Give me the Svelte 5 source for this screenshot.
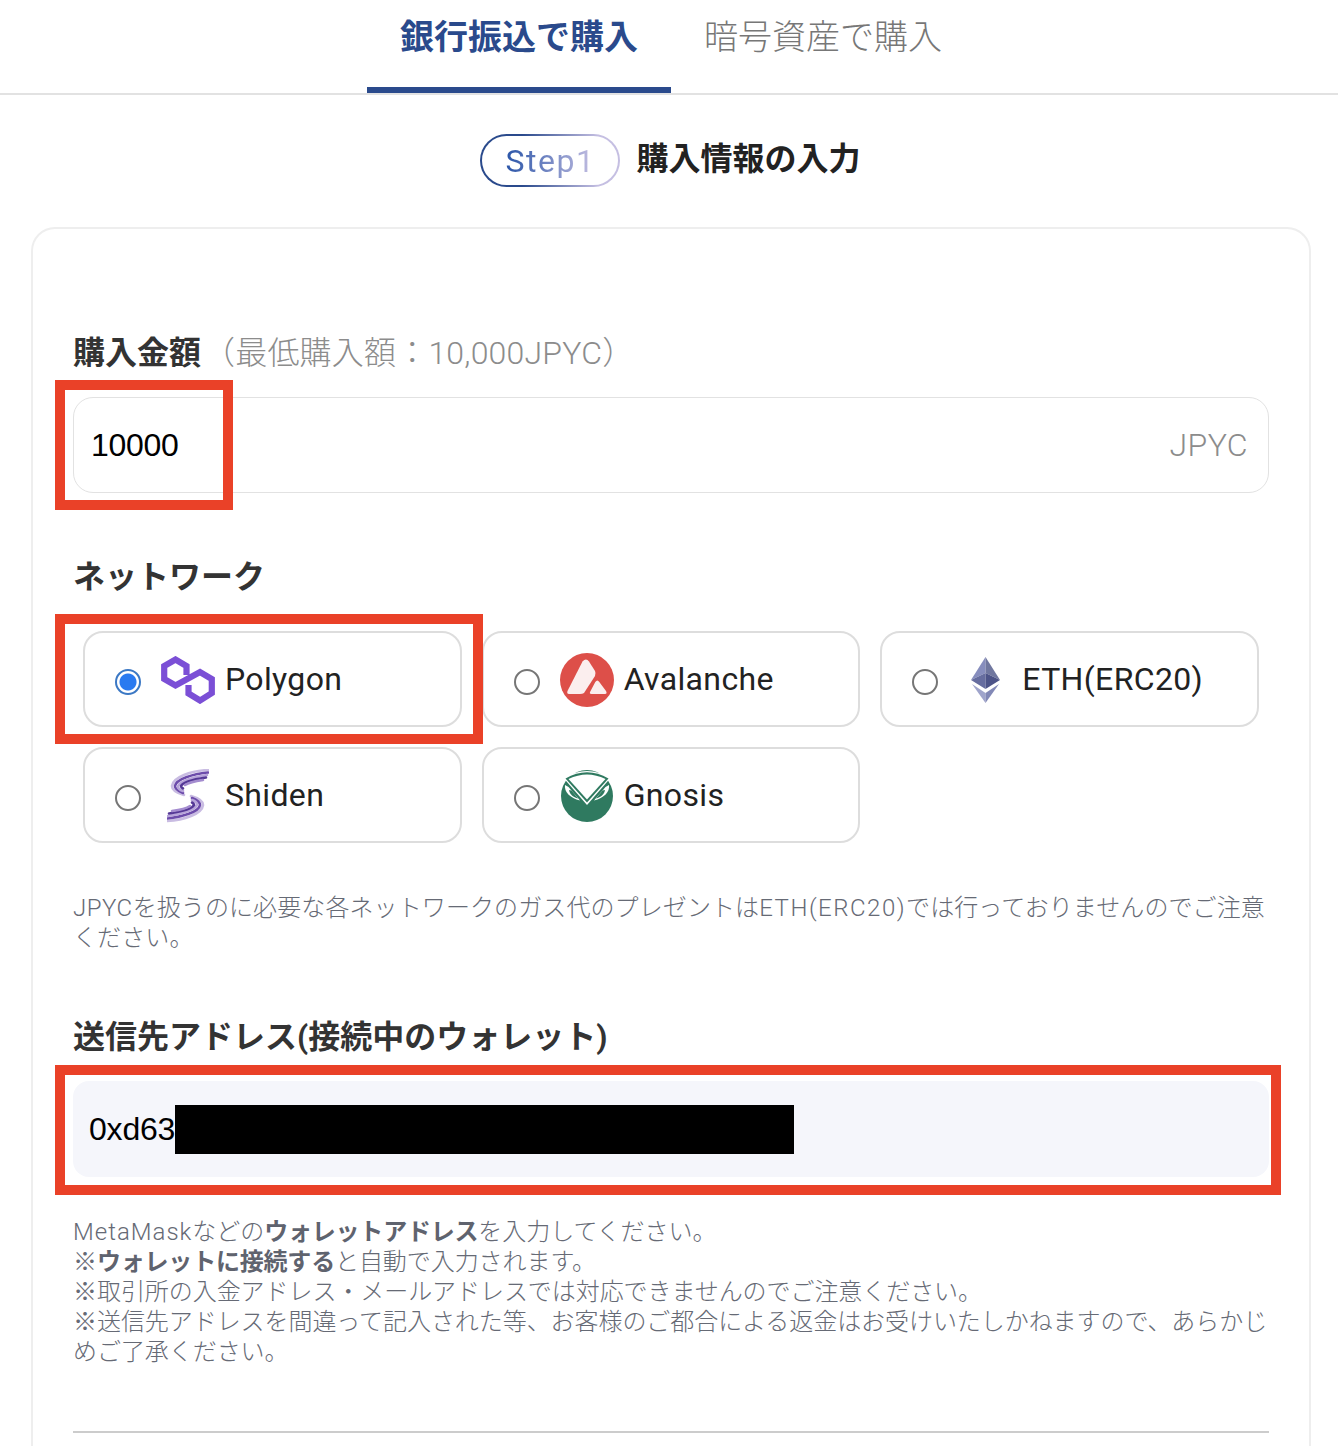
<script lang="ts">
	// Purchase form, first step: bank transfer tab with network picker.
	type Network = { id: string; label: string };
	const networks: Network[] = [
		{ id: 'polygon', label: 'Polygon' },
		{ id: 'avalanche', label: 'Avalanche' },
		{ id: 'eth', label: 'ETH(ERC20)' },
		{ id: 'shiden', label: 'Shiden' },
		{ id: 'gnosis', label: 'Gnosis' }
	];
	// one half of the Shiden mark; the other half is the same band turned 180deg
	const shidenBand = [
		{ d: 'M41 1C24 2 6 8 5 17 5 21 10 24 17 26', color: '#c9bce2' },
		{ d: 'M41 3.500C26 5 9 10 8 17 8 20 11 22 16 24', color: '#6d4cab' },
		{ d: 'M40 6C28 8 12 12 11 17.500 11 19 13 21 16 22', color: '#b7a4da' },
		{ d: 'M39 8.500C29 10 16 13 14 17 14 18 15 19 16 19.500', color: '#553896' },
		{ d: 'M36 11C29 12 21 14 18 16', color: '#a48ccf' }
	];
	let amount = $state('10000');
	let network = $state('polygon');
</script>

<div class="page">
	<nav class="tabs">
		<button class="tab active" type="button">銀行振込で購入</button>
		<button class="tab" type="button">暗号資産で購入</button>
	</nav>

	<div class="step">
		<span class="pill"><span class="pill-text">Step1</span></span>
		<h2 class="step-title">購入情報の入力</h2>
	</div>

	<section class="card">
		<div class="label first">購入金額<span class="label-sub">（最低購入額：10,000JPYC）</span></div>
		<div class="amount">
			<input class="amount-input" bind:value={amount} />
			<span class="unit">JPYC</span>
		</div>

		<div class="label net-label">ネットワーク</div>
		<div class="net-grid">
			{#each networks as n (n.id)}
				<label class="net">
					<input class="radio" type="radio" name="network" value={n.id} bind:group={network} />
					<span class="net-icon">
						{#if n.id === 'polygon'}
							<svg width="54" height="48" viewBox="0 0 54 48" fill="none">
								<path d="M25.500 19V10L14.500 3.500 3.200 10V23L14.500 29.500 39 16 50.800 23V37L39 44.500 27.500 37.500V29" stroke="#7b4fd6" stroke-width="6.200" />
							</svg>
						{:else if n.id === 'avalanche'}
							<svg width="54" height="54" viewBox="0 0 54 54">
								<circle cx="27" cy="27" r="27" fill="#dd4f49" />
								<path d="M22.500 8.500Q26 4.500 29 8.500L35 18Q36 20 35 23L24 40Q22.500 41 20 41H9Q6.500 41 7.500 38Z" fill="#fbeeee" />
								<path d="M35.300 29Q37.300 26 39.300 29L46 38Q47.500 41 45 41H31.500Q29 41 30.300 38.500Z" fill="#fbeeee" />
							</svg>
						{:else if n.id === 'eth'}
							<svg width="29" height="46" viewBox="0 0 29 46">
								<path d="M14.500 0 0 23 14.500 16Z" fill="#868dbd" />
								<path d="M14.500 0 29 23 14.500 16Z" fill="#70779f" />
								<path d="M0 23 14.500 16V32Z" fill="#666d9f" />
								<path d="M29 23 14.500 16V32Z" fill="#4d5488" />
								<path d="M1 27 14.500 46V36Z" fill="#9fa4cb" />
								<path d="M28 27 14.500 46V36Z" fill="#8288b6" />
							</svg>
						{:else if n.id === 'shiden'}
							<svg width="42" height="54" viewBox="0 0 42 54" fill="none" stroke-linecap="round" stroke-width="2.600">
								{#each shidenBand as s}
									<path d={s.d} stroke={s.color} />
								{/each}
								<g transform="rotate(180 20.500 26.500)">
									{#each shidenBand as s}
										<path d={s.d} stroke={s.color} />
									{/each}
								</g>
							</svg>
						{:else}
							<svg width="54" height="54" viewBox="0 0 54 54">
								<circle cx="27" cy="27" r="26" fill="#2f7a60" />
								<path d="M3.500 9Q27 -5 50.500 9L27 36Z" fill="#fff" />
								<path d="M5.500 9.500Q27 -3 48.500 9.500L27 33.500Z" fill="#2f7a60" />
								<path d="M8.500 10Q27 1 45.500 10L27 30.500Z" fill="#fff" />
								<path d="M5 16C4 23 10 29 20 31.500L8.500 18Z" fill="#fff" />
								<path d="M49 16C50 23 44 29 34 31.500L45.500 18Z" fill="#fff" />
								<path d="M9 21C9.500 25 13.500 28.500 18 29.500L11.500 21.500Z" fill="#2f7a60" />
								<path d="M45 21C44.500 25 40.500 28.500 36 29.500L42.500 21.500Z" fill="#2f7a60" />
							</svg>
						{/if}
					</span>
					<span class="net-name">{n.label}</span>
				</label>
			{/each}
		</div>

		<p class="note net-note"><span class="jpyc">JPYC</span>を扱うのに必要な各ネットワークのガス代のプレゼントは<span class="erc">ETH(ERC20)</span>では行っておりませんのでご注意ください。</p>

		<div class="label addr-label">送信先アドレス(接続中のウォレット)</div>
		<div class="addr">
			<span class="addr-text">0xd63</span>
			<span class="redact"></span>
		</div>

		<p class="note addr-note">
			<span class="mm">MetaMask</span>などの<b>ウォレットアドレス</b>を入力してください。<br />
			※<b>ウォレットに接続する</b>と自動で入力されます。<br />
			※取引所の入金アドレス・メールアドレスでは対応できませんのでご注意ください。<br />
			※送信先アドレスを間違って記入された等、お客様のご都合による返金はお受けいたしかねますので、あらかじめご了承ください。
		</p>
		<hr class="rule" />
	</section>

	<!-- red annotation frames sit on top of the form -->
	<div class="mark mark-amount"></div>
	<div class="mark mark-polygon"></div>
	<div class="mark mark-addr"></div>
</div>

<style>
	:global(body) {
		background: #fff;
	}
	.page {
		position: relative;
		height: 1446px;
		overflow: hidden;
		background: #fff;
		font-family: Roboto, 'Noto Sans CJK JP', sans-serif;
		color: #222;
	}
	.tabs {
		display: flex;
		justify-content: center;
		padding-left: 4px;
		height: 93px;
		border-bottom: 2px solid #e2e2e2;
	}
	.tab {
		width: 304px;
		height: 93px;
		padding: 0 0 25px;
		background: none;
		border: 0;
		font-family: inherit;
		font-size: 34px;
		font-weight: 300;
		color: #777;
		cursor: pointer;
	}
	.tab.active {
		font-weight: 700;
		color: #2a4a8c;
		border-bottom: 6px solid #2a4a8c;
		padding-bottom: 19px;
	}
	.step {
		display: flex;
		justify-content: center;
		align-items: center;
		gap: 16px;
		margin-top: 39px;
		padding-left: 3px;
		height: 53px;
	}
	.pill {
		box-sizing: border-box;
		display: flex;
		align-items: center;
		justify-content: center;
		width: 140px;
		height: 53px;
		border: 2px solid transparent;
		border-radius: 27px;
		background:
			linear-gradient(#fff, #fff) padding-box,
			linear-gradient(90deg, #2a4a8c 30%, #c5bfe2 85%) border-box;
	}
	.pill-text {
		font-size: 32px;
		letter-spacing: 1.500px;
		background: linear-gradient(90deg, #2a55a8, #c5bfe2);
		-webkit-background-clip: text;
		background-clip: text;
		color: transparent;
	}
	.step-title {
		margin: -10px 0 0;
		font-size: 32px;
		font-weight: 700;
		color: #222;
	}
	.card {
		box-sizing: border-box;
		width: 1280px;
		margin: 40px 0 0 31px;
		padding: 99px 40px 0;
		border: 2px solid #eee;
		border-bottom: 0;
		border-radius: 24px 24px 0 0;
		min-height: 1300px;
	}
	.label {
		height: 48px;
		line-height: 50px;
		font-size: 32px;
		font-weight: 700;
		color: #333;
		white-space: nowrap;
	}
	.label-sub {
		margin-left: 2px;
		font-weight: 300;
		letter-spacing: 0.200px;
		color: #8c8c8c;
	}
	.amount {
		box-sizing: border-box;
		display: flex;
		align-items: center;
		justify-content: space-between;
		height: 96px;
		margin-top: 21px;
		padding: 0 20px 0 17px;
		border: 1px solid #e2e2e2;
		border-radius: 20px;
	}
	.amount-input {
		flex: 1;
		min-width: 0;
		border: 0;
		outline: none;
		padding: 0;
		background: none;
		font-family: 'Liberation Sans', sans-serif;
		font-size: 32px;
		letter-spacing: -0.300px;
		color: #000;
	}
	.unit {
		font-size: 32px;
		font-weight: 300;
		letter-spacing: 0.400px;
		color: #8c8c8c;
	}
	.net-label {
		margin-top: 58px;
		line-height: 52px;
	}
	.net-grid {
		display: grid;
		grid-template-columns: repeat(3, 1fr);
		grid-auto-rows: 96px;
		gap: 20px;
		margin: 32px 10px 0;
	}
	.net {
		box-sizing: border-box;
		display: flex;
		align-items: center;
		padding-left: 30px;
		border: 2px solid #ddd;
		border-radius: 20px;
		cursor: pointer;
	}
	.radio {
		appearance: none;
		box-sizing: border-box;
		flex: none;
		width: 26px;
		height: 26px;
		margin: 6px 0 0;
		border: 2px solid #767676;
		border-radius: 50%;
		background: #fff;
		cursor: pointer;
	}
	.radio:checked {
		border-color: #3b78c4;
		background: radial-gradient(circle, #2a7af0 0 8px, #fff 9px);
	}
	.net-icon {
		flex: none;
		display: flex;
		align-items: center;
		justify-content: center;
		width: 58px;
		height: 60px;
		margin: 2px 8px 0 18px;
	}
	.net-name {
		margin-top: 0;
		font-size: 32px;
		letter-spacing: 0.350px;
		color: #222;
	}
	.note {
		margin: 0;
		font-size: 24px;
		line-height: 30px;
		font-weight: 300;
		color: #666a75;
	}
	.note b {
		font-weight: 700;
		letter-spacing: -0.200px;
		color: #5f636e;
	}
	.net-note {
		margin-top: 50px;
		letter-spacing: 0.100px;
	}
	.jpyc {
		letter-spacing: 0.500px;
	}
	.erc {
		letter-spacing: 1.500px;
	}
	.mm {
		letter-spacing: 1px;
	}
	.addr-label {
		margin-top: 59px;
	}
	.addr {
		display: flex;
		align-items: center;
		height: 96px;
		margin-top: 21px;
		padding-left: 16px;
		border-radius: 16px;
		background: #f5f6fb;
	}
	.addr-text {
		font-family: 'Liberation Sans', sans-serif;
		font-size: 32px;
		letter-spacing: -0.200px;
		color: #000;
	}
	.redact {
		width: 619px;
		height: 49px;
		background: #000;
	}
	.addr-note {
		margin: 40px -4px 0 0;
		letter-spacing: -0.060px;
	}
	.rule {
		height: 2px;
		margin: 64px 0 0;
		border: 0;
		background: #ccc;
	}
	.mark {
		position: absolute;
		box-sizing: border-box;
		border: 10px solid #ea4128;
		pointer-events: none;
	}
	.mark-amount {
		left: 55px;
		top: 380px;
		width: 178px;
		height: 130px;
	}
	.mark-polygon {
		left: 55px;
		top: 614px;
		width: 428px;
		height: 130px;
	}
	.mark-addr {
		left: 55px;
		top: 1065px;
		width: 1226px;
		height: 130px;
	}
</style>
